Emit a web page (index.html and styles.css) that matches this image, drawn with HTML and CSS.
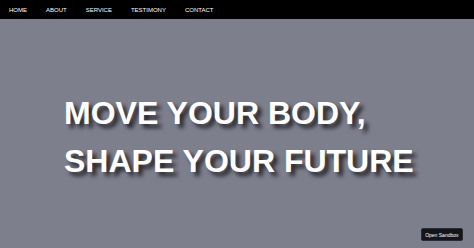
FILE: index.html
```html
<!DOCTYPE html>
<html lang="en">
<head>
<meta charset="utf-8">
<title>Move Your Body</title>
<link rel="stylesheet" href="styles.css">
</head>
<body>
<nav class="nav">
  <a class="nav-link" href="#">HOME</a>
  <a class="nav-link" href="#">ABOUT</a>
  <a class="nav-link" href="#">SERVICE</a>
  <a class="nav-link" href="#">TESTIMONY</a>
  <a class="nav-link" href="#">CONTACT</a>
</nav>
<main class="hero">
  <h1 class="hero-title">MOVE YOUR BODY,<br>SHAPE YOUR FUTURE</h1>
</main>
<button class="sandbox-btn">Open Sandbox</button>
</body>
</html>
```

FILE: styles.css
```css
html, body {
  margin: 0;
  padding: 0;
  height: 100%;
}
body {
  font-family: "Liberation Sans", Arial, sans-serif;
  background: #7e7f8d;
  overflow: hidden;
}
.nav {
  display: flex;
  align-items: center;
  gap: 19px;
  height: 19px;
  padding: 0 9px;
  background: #000;
}
.nav-link {
  color: #fff;
  text-decoration: none;
  font-size: 6px;
  letter-spacing: 0;
}
.hero {
  padding: 70px 0 0 64px;
}
.hero-title {
  margin: 0;
  color: #fff;
  font-size: 32px;
  font-weight: 700;
  line-height: 48px;
  text-shadow: 4px 4px 4px rgba(0, 0, 0, 0.75);
}
.sandbox-btn {
  position: fixed;
  right: 11px;
  bottom: 7px;
  height: 13px;
  padding: 0 3.5px;
  border: 1px solid #2a2c33;
  border-radius: 2px;
  background: #15161b;
  color: #fff;
  font-family: "Liberation Sans", Arial, sans-serif;
  font-size: 5px;
}
```
